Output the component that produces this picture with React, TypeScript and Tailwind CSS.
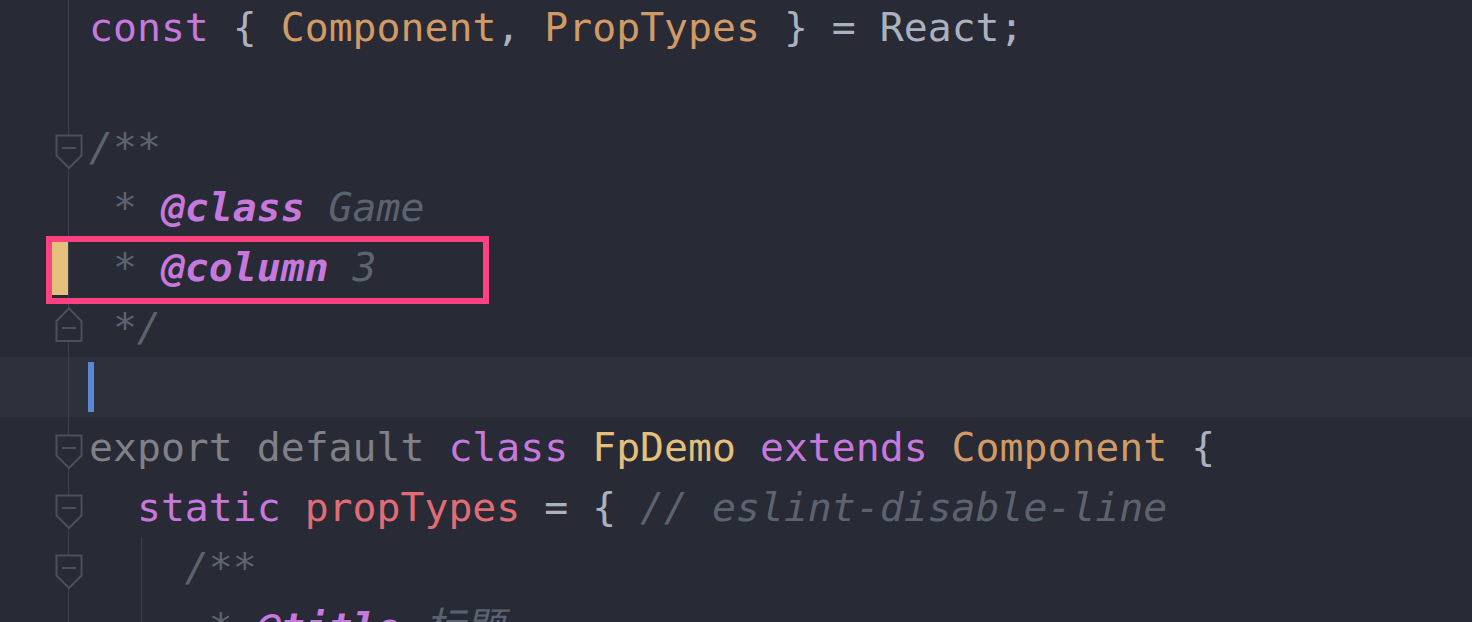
import React from 'react';

const c = {
  kw: 'text-[#c678dd]',
  type: 'text-[#d19a66]',
  cls: 'text-[#e5c07b]',
  prop: 'text-[#e06c75]',
  punc: 'text-[#abb2bf]',
  dim: 'text-[#7f8187]',
  cmt: 'text-[#5c6370] italic',
  tag: 'text-[#c678dd] italic font-bold',
};

function FoldMarker({ end }: { end?: boolean }) {
  if (end) {
    return (
      <svg className="absolute left-[55px] top-[10px]" width="28" height="36" viewBox="0 0 28 36">
        <path d="M1.5 34 V14 L14 1.5 L26.5 14 V34 Z" fill="#282a35" stroke="#4a4f5b" strokeWidth="2" />
        <path d="M7 21 H21" stroke="#4a4f5b" strokeWidth="2" />
      </svg>
    );
  }
  return (
    <svg className="absolute left-[55px] top-[17px]" width="28" height="36" viewBox="0 0 28 36">
      <path d="M1.5 1.5 H26.5 V21.5 L14 34 L1.5 21.5 Z" fill="#282a35" stroke="#4a4f5b" strokeWidth="2" />
      <path d="M7 14 H21" stroke="#4a4f5b" strokeWidth="2" />
    </svg>
  );
}

type Row = {
  code: React.ReactNode;
  fold?: 'start' | 'end';
  current?: boolean;
  marked?: boolean;
  guide?: boolean;
};

const rows: Row[] = [
  {
    code: (
      <>
        <span className={c.kw}>const</span> <span className={c.punc}>{'{'}</span>{' '}
        <span className={c.type}>Component</span>
        <span className={c.punc}>,</span> <span className={c.type}>PropTypes</span>{' '}
        <span className={c.punc}>{'}'} = React;</span>
      </>
    ),
  },
  { code: '' },
  { code: <span className={c.cmt}>/**</span>, fold: 'start' },
  {
    code: (
      <>
        <span className={c.cmt}> * </span>
        <span className={c.tag}>@class</span>
        <span className={c.cmt}> Game</span>
      </>
    ),
  },
  {
    code: (
      <>
        <span className={c.cmt}> * </span>
        <span className={c.tag}>@column</span>
        <span className={c.cmt}> 3</span>
      </>
    ),
    marked: true,
  },
  { code: <span className={c.cmt}> */</span>, fold: 'end' },
  { code: '', current: true },
  {
    code: (
      <>
        <span className={c.dim}>export default</span> <span className={c.kw}>class</span>{' '}
        <span className={c.cls}>FpDemo</span> <span className={c.kw}>extends</span>{' '}
        <span className={c.type}>Component</span> <span className={c.punc}>{'{'}</span>
      </>
    ),
    fold: 'start',
  },
  {
    code: (
      <>
        {'  '}
        <span className={c.kw}>static</span> <span className={c.prop}>propTypes</span>{' '}
        <span className={c.punc}>= {'{'}</span> <span className={c.cmt}>// eslint-disable-line</span>
      </>
    ),
    fold: 'start',
  },
  { code: <span className={c.cmt}>{'    /**'}</span>, fold: 'start', guide: true },
  {
    code: (
      <>
        <span className={c.cmt}>{'     * '}</span>
        <span className={c.tag}>@title</span>
        <span className={c.cmt}> 标题</span>
      </>
    ),
    guide: true,
  },
];

export default function App() {
  return (
    <div className="h-[622px] w-full overflow-hidden bg-[#282a35] font-['DejaVu_Sans_Mono','Noto_Sans_CJK_SC',monospace] text-[39.8px] leading-[60px]">
      <div className="-mt-[3px]">
        {rows.map((row, i) => (
          <div
            key={i}
            className={`relative flex h-[60px] ${row.current ? 'bg-[#2c313c]' : ''} ${row.marked ? 'z-10' : ''}`}
          >
            {/* gutter */}
            <div className="relative w-[89px] shrink-0">
              <div className="absolute left-[68px] top-0 bottom-0 w-px bg-[#3c404c]" />
              {row.marked && <div className="absolute left-[52px] top-[5px] h-[53px] w-[16px] bg-[#e5c07b]" />}
              {row.fold && <FoldMarker end={row.fold === 'end'} />}
            </div>

            {/* code */}
            <div className="relative whitespace-pre">
              {row.guide && <div className="absolute left-[52px] top-0 bottom-0 w-px bg-[#3c404c]" />}
              {row.code}
            </div>

            {row.current && <div className="absolute left-[88px] top-[5px] h-[50px] w-[6px] bg-[#5a87d8]" />}
            {row.marked && (
              <div className="absolute left-[46px] top-[-1px] h-[68px] w-[443px] border-[6px] border-[#ff4081]" />
            )}
          </div>
        ))}
      </div>
    </div>
  );
}
